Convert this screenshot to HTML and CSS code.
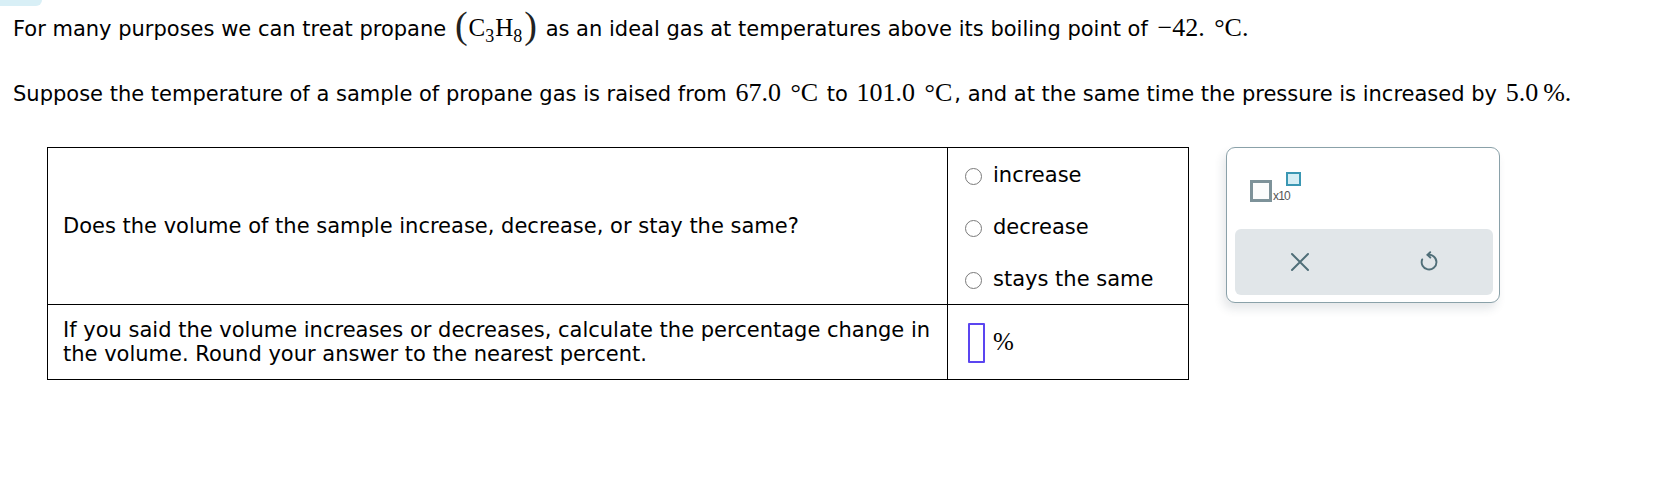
FILE: index.html
```html
<!DOCTYPE html>
<html>
<head>
<meta charset="utf-8">
<link rel="stylesheet" href="styles.css">
</head>
<body>
<div class="tab"></div>
<div class="content">
  <p class="line line1">For many purposes we can treat propane <span class="math formula"><span class="paren">(</span>C<sub>3</sub>H<sub>8</sub><span class="paren">)</span></span> as an ideal gas at temperatures above its boiling point of <span class="math temp">−42.&nbsp;°C.</span></p>
  <p class="line line2">Suppose the temperature of a sample of propane gas is raised from <span class="math">67.0&nbsp;°C</span> to <span class="math">101.0&nbsp;°C</span>, and at the same time the pressure is increased by <span class="math">5.0<span class="pc">%</span>.</span></p>
  <div class="work">
    <table class="qtable">
      <colgroup><col class="c1"><col class="c2"></colgroup>
      <tr class="row1">
        <td class="qcell">Does the volume of the sample increase, decrease, or stay the same?</td>
        <td class="acell">
          <div class="options">
            <label class="option"><span class="radio"></span><span>increase</span></label>
            <label class="option"><span class="radio"></span><span>decrease</span></label>
            <label class="option"><span class="radio"></span><span>stays the same</span></label>
          </div>
        </td>
      </tr>
      <tr class="row2">
        <td class="qcell">If you said the volume increases or decreases, calculate the percentage change in the volume. Round your answer to the nearest percent.</td>
        <td class="acell">
          <div class="answer"><span class="inputbox"></span><span class="pct">%</span></div>
        </td>
      </tr>
    </table>
    <div class="panel">
      <div class="tools">
        <div class="x10">
          <span class="bigbox"></span><span class="x10text">x10</span><span class="smallbox"></span>
        </div>
      </div>
      <div class="bar">
        <button class="btn" aria-label="clear">
          <svg width="22" height="22" viewBox="0 0 22 22"><path d="M3 3 L19 19 M19 3 L3 19" stroke="#4f6e78" stroke-width="2" stroke-linecap="round" fill="none"/></svg>
        </button>
        <button class="btn" aria-label="undo">
          <svg width="24" height="24" viewBox="0 0 24 24"><path d="M10.6 4.9 A7.4 7.4 0 1 1 5.2 9.4" stroke="#4f6e78" stroke-width="1.9" stroke-linecap="round" fill="none"/><path d="M13.2 2.2 L10.4 4.9 L13.3 7.5" stroke="#4f6e78" stroke-width="1.9" stroke-linecap="round" stroke-linejoin="round" fill="none"/></svg>
        </button>
      </div>
    </div>
  </div>
</div>
</body>
</html>
```

FILE: styles.css
```css
html, body {
  margin: 0;
  padding: 0;
  background: #ffffff;
}
body {
  font-family: "DejaVu Sans", Verdana, sans-serif;
  font-size: 21px;
  color: #000000;
  width: 1669px;
  height: 484px;
  overflow: hidden;
}
.tab {
  width: 42px;
  height: 6px;
  background: #d8eff6;
  border-bottom-right-radius: 10px;
}
.content {
  padding-left: 13px;
}
.line {
  margin: 0;
  line-height: 32px;
  white-space: nowrap;
}
.line1 {
  margin-top: 7px;
}
.line2 {
  margin-top: 33px;
}
.math {
  font-family: "Liberation Serif", "Times New Roman", serif;
  font-size: 26px;
  line-height: 1;
  word-spacing: 3px;
}
.line2 .math {
  margin: 0 2px;
}
.temp {
  margin-left: 3px;
}
.formula {
  font-size: 25px;
  padding: 0 1px;
}
.paren {
  font-size: 38px;
  line-height: 0;
  color: #222;
  padding: 0 1px;
  vertical-align: -2px;
}
.math sub {
  font-size: 18px;
  line-height: 0;
  vertical-align: -6px;
  padding: 0 1px 0 0;
}
.pc {
  margin-left: 5px;
}
.work {
  display: flex;
  align-items: flex-start;
  gap: 37px;
  margin-top: 37px;
  padding-left: 34px;
}
.qtable {
  border-collapse: collapse;
  table-layout: fixed;
  width: 1141px;
}
.c1 {
  width: 900px;
}
.c2 {
  width: 241px;
}
.qtable td {
  border: 1px solid #000;
  padding: 0;
}
.qcell {
  padding: 0 6px 0 15px !important;
  line-height: 24px;
  vertical-align: middle;
}
.row1 .acell {
  padding: 1px 0 0 17px !important;
  vertical-align: top;
}
.options {
  display: flex;
  flex-direction: column;
  gap: 1px;
}
.option {
  display: flex;
  align-items: center;
  height: 51px;
  gap: 11px;
  white-space: nowrap;
}
.radio {
  flex: none;
  width: 15px;
  height: 15px;
  border: 1.5px solid #7a7a7a;
  border-radius: 50%;
  background: #fff;
  margin-top: 3px;
}
.row2 td {
  height: 74px;
}
.row2 .acell {
  padding-left: 20px !important;
}
.answer {
  display: flex;
  align-items: center;
  gap: 8px;
}
.inputbox {
  width: 13px;
  height: 36px;
  border: 2px solid #5b45f0;
  border-radius: 1px;
  margin-top: 2px;
}
.pct {
  font-family: "Liberation Serif", "Times New Roman", serif;
  font-size: 25px;
}
.panel {
  width: 258px;
  height: 147px;
  border: 1px solid #8aa1a9;
  border-radius: 9px;
  box-shadow: -3px 6px 10px rgba(40, 60, 70, 0.12);
  padding: 0 6px 7px 8px;
  display: flex;
  flex-direction: column;
  box-sizing: content-box;
  background: #fff;
}
.tools {
  height: 81px;
  padding-left: 15px;
  padding-top: 24px;
  box-sizing: border-box;
  flex: none;
}
.x10 {
  display: flex;
  align-items: flex-start;
}
.bigbox {
  width: 16px;
  height: 16px;
  border: 3px solid #7d9299;
  background: #fbfcfc;
  margin-top: 8px;
}
.x10text {
  font-family: "Liberation Sans", Arial, sans-serif;
  font-size: 12px;
  color: #555;
  margin-top: 17px;
  margin-left: 1px;
  letter-spacing: -0.8px;
}
.smallbox {
  width: 11px;
  height: 10px;
  border: 2px solid #3a97b3;
  background: #d5eef5;
  margin-left: -4px;
}
.bar {
  flex: 1;
  display: flex;
  background: #e1e6e9;
  border-radius: 6px;
}
.btn {
  flex: 1;
  border: 0;
  background: transparent;
  display: flex;
  align-items: center;
  justify-content: center;
  padding: 0;
  margin: 0;
}
```
